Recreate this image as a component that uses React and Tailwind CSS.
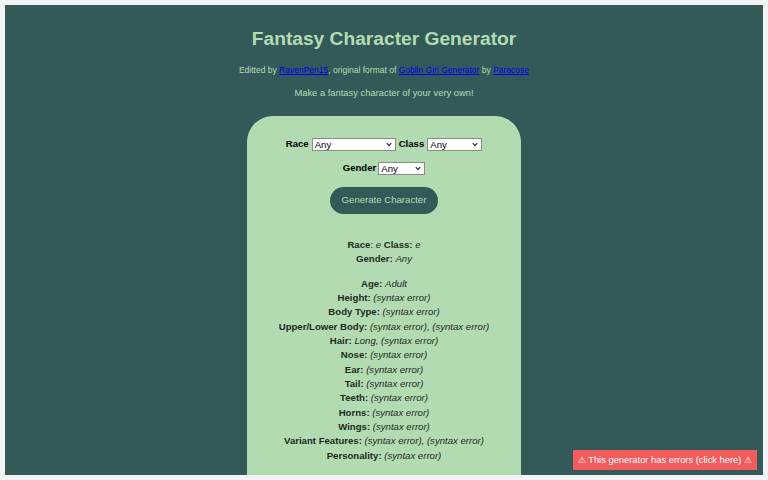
import { useState } from "react";

const results = [
  { label: "Age", value: "Adult" },
  { label: "Height", value: "(syntax error)" },
  { label: "Body Type", value: "(syntax error)" },
  { label: "Upper/Lower Body", value: "(syntax error), (syntax error)" },
  { label: "Hair", value: "Long, (syntax error)" },
  { label: "Nose", value: "(syntax error)" },
  { label: "Ear", value: "(syntax error)" },
  { label: "Tail", value: "(syntax error)" },
  { label: "Teeth", value: "(syntax error)" },
  { label: "Horns", value: "(syntax error)" },
  { label: "Wings", value: "(syntax error)" },
  { label: "Variant Features", value: "(syntax error), (syntax error)" },
  { label: "Personality", value: "(syntax error)" },
];

const Pick = ({ w, value, onChange, options }) => (
  <div className={`relative ${w} h-[13px]`}>
    <select
      value={value}
      onChange={(e) => onChange(e.target.value)}
      className="appearance-none w-full h-full bg-white border border-[#8a8a8a] text-[9.6px] leading-none text-black pl-[2px] rounded-none"
    >
      {options.map((o) => <option key={o}>{o}</option>)}
    </select>
    <svg className="absolute right-[4px] top-[4px] pointer-events-none" width="6" height="5" viewBox="0 0 6 5">
      <path d="M0.8 1.2 L3 3.6 L5.2 1.2" fill="none" stroke="#222" strokeWidth="1.2" />
    </svg>
  </div>
);

const App = () => {
  const [race, setRace] = useState("Any");
  const [cls, setCls] = useState("Any");
  const [gender, setGender] = useState("Any");

  return (
    <div className="w-[768px] h-[480px] bg-[#f3f4f5] p-[5px] font-['Liberation_Sans',Arial,sans-serif]">
      <div className="relative h-[470px] bg-[#335a58] overflow-hidden flex flex-col items-center">
        <h1 className="mt-[17px] text-[19.2px] font-bold text-[#b3dcb3] leading-[34px]">Fantasy Character Generator</h1>
        <p className="mt-[9px] text-[8.5px] text-[#b3dcb3] leading-[10px]">
          Editted by <a href="#" className="text-[#0000ee] underline">RavenPen15</a>, original format of{" "}
          <a href="#" className="text-[#0000ee] underline">Goblin Girl Generator</a> by{" "}
          <a href="#" className="text-[#0000ee] underline">Paracose</a>
        </p>
        <p className="mt-[11px] text-[9.4px] text-[#b3dcb3] leading-[14px]">Make a fantasy character of your very own!</p>

        <div className="mt-[16px] w-[274px] grow bg-[#b2dbb1] rounded-t-[26px] flex flex-col items-center pt-[22px] text-[9.6px] text-[#1e2a1e]">
          <div className="flex items-center h-[13px]">
            <b className="text-black mr-[3px]">Race</b>
            <Pick w="w-[84px]" value={race} onChange={setRace} options={["Any", "Human", "Elf", "Dwarf", "Orc", "Goblin"]} />
            <b className="text-black ml-[3px] mr-[3px]">Class</b>
            <Pick w="w-[55px]" value={cls} onChange={setCls} options={["Any", "Warrior", "Mage", "Rogue"]} />
          </div>
          <div className="flex items-center h-[13px] mt-[11px]">
            <b className="text-black mr-[2px]">Gender</b>
            <Pick w="w-[47px]" value={gender} onChange={setGender} options={["Any", "Male", "Female"]} />
          </div>
          <button className="mt-[12px] w-[108px] h-[27px] rounded-full bg-[#335a58] text-[#b3dcb3] text-[9.6px]">Generate Character</button>

          <div className="mt-[24px] flex flex-col items-center leading-[14.35px]">
            <div><b>Race</b>: <i>e</i> <b>Class:</b> <i>e</i></div>
            <div><b>Gender:</b> <i>Any</i></div>
          </div>
          <div className="mt-[10px] flex flex-col items-center leading-[14.35px]">
            {results.map((r) => (
              <div key={r.label}><b>{r.label}:</b> <i>{r.value}</i></div>
            ))}
          </div>
        </div>

        <button className="absolute right-[6px] bottom-[5px] h-[20px] px-[5px] bg-[#f25c5c] text-white text-[9.35px]">
          ⚠ This generator has errors (click here) ⚠
        </button>
      </div>
    </div>
  );
};

export default App;
